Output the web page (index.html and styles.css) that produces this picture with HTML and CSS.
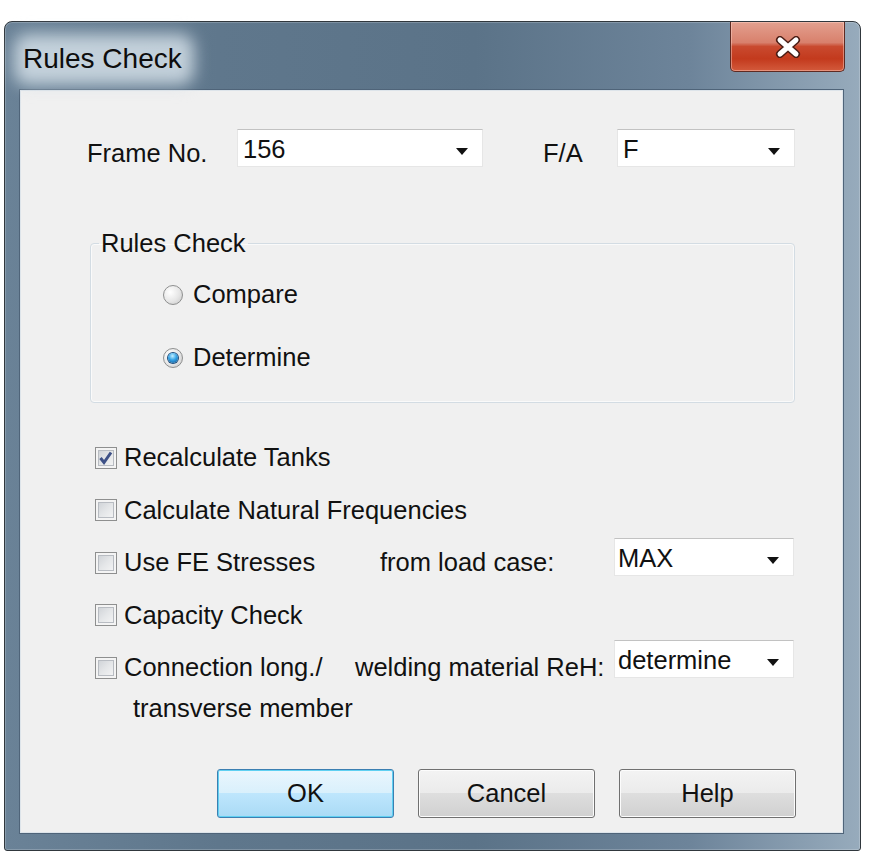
FILE: index.html
```html
<!DOCTYPE html>
<html lang="en">

<head>
    <meta charset="UTF-8">
    <title>Rules Check</title>
    <link rel="stylesheet" href="styles.css">
</head>

<body>
<div class="window">
    <div class="titlebar">
        <span class="title">Rules Check</span>
        <div class="close">
            <svg width="26" height="22" viewBox="0 0 26 22">
                <path d="M5 4 L21 18 M21 4 L5 18" stroke="#4a1d15" stroke-width="8" stroke-linecap="round"/>
                <path d="M5 4 L21 18 M21 4 L5 18" stroke="#fff" stroke-width="5" stroke-linecap="round"/>
            </svg>
        </div>
    </div>

    <div class="client">
        <div class="frame-row">
            <span class="label lbl-frame">Frame No.</span>
            <div class="combo combo-frame"><span>156</span><i class="arrow"></i></div>
            <span class="label lbl-fa">F/A</span>
            <div class="combo combo-fa"><span>F</span><i class="arrow"></i></div>
        </div>

        <fieldset class="group">
            <legend>Rules Check</legend>
            <div class="radios">
                <div class="radio"><span class="mark"></span>Compare</div>
                <div class="radio checked"><span class="mark"></span>Determine</div>
            </div>
        </fieldset>

        <div class="checks">
            <div class="check checked">
                <span class="box">
                    <svg width="20" height="20" viewBox="0 0 20 20"><path d="M4.5 10 L8 14.5 L15 4.5" fill="none" stroke="#3e5187" stroke-width="3"/></svg>
                </span>
                <span>Recalculate Tanks</span>
            </div>
            <div class="check"><span class="box"></span><span>Calculate Natural Frequencies</span></div>
            <div class="check">
                <span class="box"></span>
                <span class="text-fe">Use FE Stresses</span>
                <span class="text-load">from load case:</span>
                <div class="combo combo-side combo-max"><span>MAX</span><i class="arrow"></i></div>
            </div>
            <div class="check"><span class="box"></span><span>Capacity Check</span></div>
            <div class="check">
                <span class="box"></span>
                <span class="text-conn">Connection long./</span>
                <span class="text-weld">welding material ReH:</span>
                <div class="combo combo-side combo-weld"><span>determine</span><i class="arrow"></i></div>
            </div>
            <div class="second-line">transverse member</div>
        </div>

        <div class="buttons">
            <button class="btn default">OK</button>
            <button class="btn">Cancel</button>
            <button class="btn">Help</button>
        </div>
    </div>
</div>
</body>

</html>
```

FILE: styles.css
```css
html, body {
    margin: 0;
    padding: 0;
    background: #fff;
}

body {
    font-family: "Liberation Sans", Arial, sans-serif;
    font-size: 25.5px;
    color: #111;
}

/* window frame */
.window {
    box-sizing: border-box;
    width: 857px;
    height: 830px;
    margin: 21px 0 0 4px;
    padding: 0 17px 17px 15px;
    border: 1px solid #30373d;
    border-radius: 8px 8px 3px 3px;
    background: linear-gradient(90deg, #6a8297 0%, #5f778c 25%, #5b7388 55%, #6d849a 80%, #97abbc 100%);
    box-shadow: inset 0 0 0 1px rgba(255, 255, 255, .2);
}

.titlebar {
    display: flex;
    justify-content: space-between;
    align-items: flex-start;
    height: 68px;
}

.title {
    position: relative;
    z-index: 0;
    padding: 21px 0 0 3px;
    font-size: 28px;
    line-height: 32px;
    color: #0d0d0d;
}

.title::before {
    content: "";
    position: absolute;
    left: -6px;
    top: 12px;
    right: -12px;
    bottom: -10px;
    z-index: -1;
    border-radius: 14px;
    background: rgba(212, 223, 232, .85);
    filter: blur(8px);
}

.close {
    box-sizing: border-box;
    width: 115px;
    height: 50px;
    margin-right: -2px;
    display: flex;
    align-items: center;
    justify-content: center;
    border: 1px solid #5e2a22;
    border-top: none;
    border-radius: 0 0 5px 5px;
    background: linear-gradient(#e3a08f 0%, #d8806c 42%, #c94a2f 50%, #c33a1d 75%, #d35a3c 100%);
    box-shadow: inset 0 0 0 1px rgba(255, 215, 205, .45);
}

/* client area */
.client {
    box-sizing: border-box;
    height: 743px;
    background: #f0f0f0;
    border: 1px solid #dde4ea;
    box-shadow: 0 0 0 1px #4f6479;
}

.frame-row {
    display: flex;
    align-items: flex-start;
    margin: 38px 0 0 66px;
}

.label {
    margin-top: 10px;
    line-height: 29px;
}

.lbl-frame {
    width: 150px;
}

.lbl-fa {
    width: 74px;
    margin-left: 60px;
}

.combo {
    box-sizing: border-box;
    height: 38px;
    display: flex;
    justify-content: space-between;
    align-items: flex-start;
    padding: 5px 14px 0 5px;
    background: #fff;
    border: 1px solid #e6e6e6;
    border-top-color: #c2c2c2;
    line-height: 29px;
}

.combo .arrow {
    margin-top: 13px;
    border-left: 6px solid transparent;
    border-right: 6px solid transparent;
    border-top: 7px solid #111;
}

.combo-frame {
    width: 246px;
}

.combo-fa {
    width: 178px;
}

/* group box */
.group {
    box-sizing: border-box;
    width: 705px;
    margin: 61px 0 0 69px;
    padding: 0;
    border: 1px solid #d3dce3;
    border-radius: 4px;
    box-shadow: inset 0 0 0 1px #fafafa;
}

.group legend {
    margin-left: 8px;
    padding: 0 2px;
    line-height: 29px;
}

.radios {
    display: flex;
    flex-direction: column;
    gap: 34px;
    padding: 22px 0 30px 72px;
}

.radio {
    display: flex;
    align-items: center;
    height: 29px;
}

.radio .mark {
    box-sizing: border-box;
    width: 20px;
    height: 20px;
    margin-right: 10px;
    display: flex;
    align-items: center;
    justify-content: center;
    border: 1px solid #8e8f8f;
    border-radius: 50%;
    background: radial-gradient(circle at 35% 35%, #fff 0%, #e6e6e6 55%, #c4c4c4 100%);
}

.radio.checked .mark::after {
    content: "";
    width: 10px;
    height: 10px;
    border-radius: 50%;
    background: radial-gradient(circle at 45% 30%, #c4f0ff 0%, #34a3e6 45%, #0d4f8c 100%);
    box-shadow: 0 0 0 1px #1e4f7e;
}

/* checkboxes */
.checks {
    display: flex;
    flex-direction: column;
    gap: 23.5px;
    margin: 40px 0 0 74px;
}

.check {
    display: flex;
    align-items: center;
    height: 29px;
}

.box {
    box-sizing: border-box;
    flex: none;
    width: 22px;
    height: 22px;
    margin-right: 7px;
    display: flex;
    align-items: center;
    justify-content: center;
    border: 1px solid #8e8f8f;
    background: linear-gradient(135deg, #c9cdd2 0%, #e4e6e8 50%, #f8f8f8 100%);
    box-shadow: inset 0 0 0 2px #f4f4f4, inset 0 0 0 3px #b8bcc2;
}

.text-fe {
    width: 256px;
}

.text-load {
    width: 234px;
}

.text-conn {
    width: 231px;
}

.text-weld {
    width: 259px;
}

.combo-side {
    width: 180px;
    padding-left: 3px;
}

.combo-max {
    margin-top: -12px;
}

.combo-weld {
    margin-top: -18px;
}

.checks .second-line {
    margin: -12px 0 0 38px;
    line-height: 29px;
}

/* dialog buttons */
.buttons {
    display: flex;
    gap: 24px;
    margin: 46px 0 0 196px;
}

.btn {
    box-sizing: border-box;
    width: 177px;
    height: 49px;
    padding: 0;
    font: inherit;
    color: #111;
    border: 1px solid #707070;
    border-radius: 3px;
    background: linear-gradient(#f3f3f3 0%, #ebebeb 49%, #dedede 50%, #d0d0d0 100%);
    box-shadow: inset 0 0 0 1px #fcfcfc;
}

.btn.default {
    border-color: #3c7fb1;
    background: linear-gradient(#eaf6fd 0%, #d9f0fc 49%, #bee6fd 50%, #a9daf5 100%);
    box-shadow: inset 0 0 0 1px #5fd0f2;
}
```
